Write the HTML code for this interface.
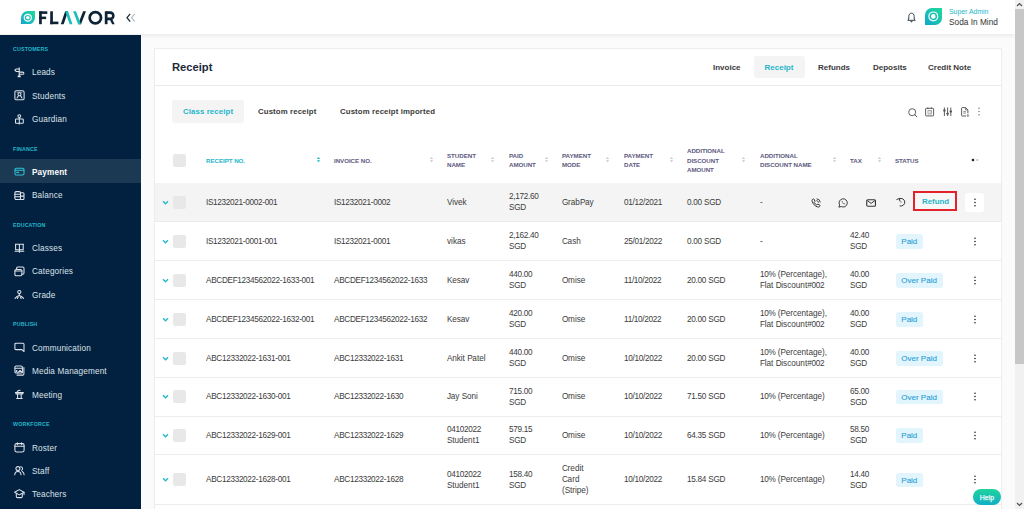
<!DOCTYPE html><html><head><meta charset="utf-8"><style>
*{box-sizing:border-box;margin:0;padding:0}
html,body{width:1024px;height:509px;overflow:hidden}
body{position:relative;background:#fbfbfb;font-family:"Liberation Sans", sans-serif;color:#333}
.a{position:absolute;white-space:nowrap}
.sb{position:absolute;left:0;top:35px;width:141px;height:474px;background:#022140}
.sec{position:absolute;left:13px;font-size:5.3px;font-weight:bold;color:#25b6ca;letter-spacing:0.15px}
.it{position:absolute;left:32px;font-size:8.2px;color:#dde2e8;line-height:10px;letter-spacing:0.15px}
.ic{position:absolute;left:13.5px;width:11px;height:11px}
.th{position:absolute;font-size:6.2px;font-weight:bold;color:#5f5c7c;line-height:9.6px;letter-spacing:-0.05px}
.td{position:absolute;font-size:8.2px;color:#3c3c3c;line-height:11px}
.n{letter-spacing:-0.31px}
.sort{position:absolute;width:5px;height:7px}
.chk{position:absolute;left:173px;width:13px;height:13px;background:#e8e8e8;border-radius:2px}
.chev{position:absolute;left:162px;width:7px;height:5px}
.badge{position:absolute;left:895.5px;height:14.5px;background:#e3f5fc;color:#1fa0d8;-webkit-text-stroke:0.1px #1fa0d8;font-size:8px;line-height:15.2px;padding:0 5.8px;border-radius:2.5px}
.dots{position:absolute;left:972.5px;width:4px;height:9px}
.rline{position:absolute;left:155px;width:846px;height:1px;background:#ececec}
</style></head><body>
<div class="a" style="left:0;top:0;width:1015px;height:34px;background:#fff;box-shadow:0 1.5px 4px rgba(0,0,0,0.07)"></div>
<svg class="a" style="left:21px;top:10.8px" width="14" height="13.4" viewBox="0 0 14 14" preserveAspectRatio="none">
<defs><linearGradient id="lg1" x1="0" y1="1" x2="1" y2="0"><stop offset="0" stop-color="#14a6d2"/><stop offset="1" stop-color="#1fd99a"/></linearGradient></defs>
<path d="M0 14 V7 A7 7 0 0 1 7 0 H14 V7 A7 7 0 0 1 7 14 Z" fill="url(#lg1)"/>
<circle cx="6.8" cy="7" r="3.55" fill="none" stroke="#fff" stroke-width="1.25"/><circle cx="6.8" cy="7" r="1.75" fill="#fff"/></svg>
<svg class="a" style="left:0;top:0" width="140" height="30" viewBox="0 0 140 30">
<g fill="#0f2338">
<rect x="39.1" y="11.3" width="2.7" height="12.9"/><rect x="39.1" y="11.3" width="8.2" height="2.6"/><rect x="39.1" y="16.6" width="7" height="2.5"/>
<rect x="50.2" y="11.3" width="2.7" height="12.9"/><rect x="50.2" y="21.6" width="8.2" height="2.6"/>
<polygon points="60.8,24.2 63.7,24.2 68.1,11.3 65.2,11.3"/>
<polygon points="83.1,11.3 86,11.3 81,24.2 78.1,24.2"/>
<rect x="104.8" y="11.3" width="2.7" height="12.9"/>
<polygon points="109.3,18.6 111.9,18.6 114.7,24.2 112.1,24.2"/>
</g>
<g fill="#1cc0b8"><polygon points="65.2,11.3 68.1,11.3 72.5,24.2 69.6,24.2"/><polygon points="73.1,11.3 76,11.3 81,24.2 78.1,24.2"/></g>
<circle cx="95.35" cy="17.75" r="5.7" fill="none" stroke="#0f2338" stroke-width="2.7"/>
<path d="M106 12.6 H110.2 A3.15 3.15 0 0 1 110.2 18.9 H106" fill="none" stroke="#0f2338" stroke-width="2.6"/>
<path d="M130.2 13.8 L127 17.7 L130.2 21.6" fill="none" stroke="#1d2b3a" stroke-width="1.3"/>
<path d="M134.8 13.8 L131.6 17.7 L134.8 21.6" fill="none" stroke="#b9bec4" stroke-width="1.3"/>
</svg>
<svg class="a" style="left:907px;top:12px" width="9" height="11" viewBox="0 0 9 11"><path d="M4.5 1.2 C2.6 1.2 1.8 2.8 1.8 4.5 V7 L0.8 8.3 H8.2 L7.2 7 V4.5 C7.2 2.8 6.4 1.2 4.5 1.2Z" fill="none" stroke="#1d2b3a" stroke-width="0.9"/><path d="M3.5 9.3 Q4.5 10.6 5.5 9.3" fill="#1d2b3a" stroke="#1d2b3a" stroke-width="0.8"/></svg>
<svg class="a" style="left:925px;top:8px" width="17" height="17" viewBox="0 0 17 17">
<defs><linearGradient id="lg2" x1="0" y1="1" x2="1" y2="0"><stop offset="0" stop-color="#12a6cf"/><stop offset="1" stop-color="#1fdb98"/></linearGradient></defs>
<path d="M0 17 V7 A7 7 0 0 1 7 0 H17 V10 A7 7 0 0 1 10 17 Z" fill="url(#lg2)"/>
<circle cx="8.3" cy="8.4" r="4.4" fill="none" stroke="#fff" stroke-width="1.2"/><circle cx="8.3" cy="8.4" r="2.3" fill="#fff"/></svg>
<div class="a" style="left:949px;top:7.8px;font-size:6.9px;color:#25b6ca;line-height:8px">Super Admin</div>
<div class="a" style="left:949px;top:17px;font-size:8.3px;color:#333;line-height:10px">Soda In Mind</div>
<div class="a" style="left:1015px;top:0;width:9px;height:509px;background:#f1f1f1"></div>
<div class="a" style="left:1015px;top:9px;width:9px;height:355px;background:#c7c7c7"></div>
<svg class="a" style="left:1016px;top:2px" width="7" height="5" viewBox="0 0 7 5"><path d="M1 4 L3.5 1.5 L6 4" fill="none" stroke="#505050" stroke-width="1.2"/></svg>
<svg class="a" style="left:1016px;top:502px" width="7" height="5" viewBox="0 0 7 5"><path d="M1 1 L3.5 3.5 L6 1" fill="none" stroke="#505050" stroke-width="1.2"/></svg>
<div class="sb"></div>
<div class="a" style="left:0;top:159px;width:141px;height:24px;background:#1c3954"></div>
<div class="sec" style="top:46px;line-height:6px">CUSTOMERS</div>
<div class="sec" style="top:146px;line-height:6px">FINANCE</div>
<div class="sec" style="top:222px;line-height:6px">EDUCATION</div>
<div class="sec" style="top:321px;line-height:6px">PUBLISH</div>
<div class="sec" style="top:421px;line-height:6px">WORKFORCE</div>
<div class="it" style="top:68.0px;">Leads</div>
<svg class="ic" style="top:66.5px" viewBox="0 0 11 11"><g fill="none" stroke="#dfe4ea" stroke-width="1.05" stroke-linecap="round" stroke-linejoin="round"><path d="M5.2 0.8 V8.6"/><path d="M5.2 1.9 H2.3 L0.8 3.2 L2.3 4.5 H5.2"/><path d="M5.2 5.1 H8.6 Q9.9 5.1 9.9 6.2 Q9.9 7.3 8.6 7.3 H5.2"/><rect x="3.6" y="8.6" width="3.2" height="1.6" rx="0.4" fill="#dfe4ea" stroke="none"/></g></svg>
<div class="it" style="top:91.5px;">Students</div>
<svg class="ic" style="top:90px" viewBox="0 0 11 11"><g fill="none" stroke="#dfe4ea" stroke-width="1.05" stroke-linecap="round" stroke-linejoin="round"><rect x="0.9" y="0.8" width="9.2" height="9" rx="1.4"/><circle cx="5.5" cy="4.2" r="1.5"/><path d="M3 8 L4.4 5.9 M8 8 L6.6 5.9"/><path d="M3 2.3 H8" stroke-width="0.6"/></g></svg>
<div class="it" style="top:115.0px;">Guardian</div>
<svg class="ic" style="top:113.5px" viewBox="0 0 11 11"><g fill="none" stroke="#dfe4ea" stroke-width="1.05" stroke-linecap="round" stroke-linejoin="round"><circle cx="5.3" cy="2.1" r="1.4"/><rect x="1.5" y="4.9" width="7.8" height="4.4" rx="0.8"/><path d="M5.3 3.5 V9.9"/></g></svg>
<div class="it" style="top:167.5px;font-weight:bold;color:#fff">Payment</div>
<svg class="ic" style="top:166px" viewBox="0 0 11 11"><g fill="none" stroke="#2fc0d2" stroke-width="1.05" stroke-linecap="round" stroke-linejoin="round"><rect x="1" y="2.2" width="9" height="6.8" rx="1.3"/><path d="M1 4.2 H10"/><path d="M2.7 6.4 H4.6" stroke-width="1.2"/></g></svg>
<div class="it" style="top:191.0px;">Balance</div>
<svg class="ic" style="top:189.5px" viewBox="0 0 11 11"><g fill="none" stroke="#dfe4ea" stroke-width="1.05" stroke-linecap="round" stroke-linejoin="round"><rect x="0.9" y="1.6" width="5.6" height="7.8" rx="1.2"/><path d="M0.9 4.2 H6.5 M0.9 6.8 H6.5"/><path d="M6.5 2.8 H9 Q10 2.8 10 3.8 V8.4 Q10 9.4 9 9.4 H6.5 M6.5 6.1 H10"/></g></svg>
<div class="it" style="top:243.5px;">Classes</div>
<svg class="ic" style="top:242px" viewBox="0 0 11 11"><g fill="none" stroke="#dfe4ea" stroke-width="1.05" stroke-linecap="round" stroke-linejoin="round"><path d="M1.6 2.2 H4.6 Q5.4 2.2 5.4 3 V8 M9.2 2.2 H6.2 Q5.4 2.2 5.4 3"/><path d="M1.6 2.2 V7.8 H9.2 V2.2"/><path d="M1 9.3 H9.8 M5.4 7.8 V10.2"/></g></svg>
<div class="it" style="top:267.0px;">Categories</div>
<svg class="ic" style="top:265.5px" viewBox="0 0 11 11"><g fill="none" stroke="#dfe4ea" stroke-width="1.05" stroke-linecap="round" stroke-linejoin="round"><rect x="0.9" y="3.4" width="7" height="6.4" rx="1.3"/><path d="M0.9 5 H7.9"/><path d="M2.6 3.4 V2.2 Q2.6 1 3.8 1 H8.8 Q10 1 10 2.2 V7 Q10 8.2 8.8 8.2 H7.9"/></g></svg>
<div class="it" style="top:290.5px;">Grade</div>
<svg class="ic" style="top:289px" viewBox="0 0 11 11"><g fill="none" stroke="#dfe4ea" stroke-width="1.05" stroke-linecap="round" stroke-linejoin="round"><circle cx="5.3" cy="3.1" r="1.6"/><path d="M5.3 4.7 V6.4"/><path d="M1 9.4 Q3 7.2 5.3 6.6 Q7.6 7.2 9.6 9.4"/><path d="M3.4 9.5 L4.2 8 M7.2 9.5 L6.4 8"/></g></svg>
<div class="it" style="top:343.5px;">Communication</div>
<svg class="ic" style="top:342px" viewBox="0 0 11 11"><g fill="none" stroke="#dfe4ea" stroke-width="1.05" stroke-linecap="round" stroke-linejoin="round"><path d="M2 1.2 H8.9 Q10 1.2 10 2.3 V9.6 L7.9 7.6 H2 Q0.9 7.6 0.9 6.5 V2.3 Q0.9 1.2 2 1.2 Z"/></g></svg>
<div class="it" style="top:366.5px;">Media Management</div>
<svg class="ic" style="top:365px" viewBox="0 0 11 11"><g fill="none" stroke="#dfe4ea" stroke-width="1.05" stroke-linecap="round" stroke-linejoin="round"><rect x="0.9" y="1" width="7.5" height="7" rx="1.3"/><path d="M0.9 3.2 H8.4"/><path d="M3.6 8 L6 5.3 L8.4 7.6"/><circle cx="2.5" cy="6" r="0.5"/><path d="M9.9 2.6 V8.9 Q9.9 10.1 8.7 10.1 H3"/></g></svg>
<div class="it" style="top:390.5px;">Meeting</div>
<svg class="ic" style="top:389px" viewBox="0 0 11 11"><g fill="none" stroke="#dfe4ea" stroke-width="1.05" stroke-linecap="round" stroke-linejoin="round"><path d="M3 3.1 Q3.8 0.9 6.2 1.2"/><path d="M1.4 3.6 H9.4 L8.6 5 H2.2 Z"/><path d="M3.6 5 V9.2 M7.2 5 V9.2 M2.6 9.5 H8.2"/></g></svg>
<div class="it" style="top:443.5px;">Roster</div>
<svg class="ic" style="top:442px" viewBox="0 0 11 11"><g fill="none" stroke="#dfe4ea" stroke-width="1.05" stroke-linecap="round" stroke-linejoin="round"><rect x="0.9" y="1.6" width="9.2" height="8.3" rx="1.6"/><path d="M0.9 4.2 H10.1 M3.4 0.7 V2.6 M7.6 0.7 V2.6"/></g></svg>
<div class="it" style="top:466.5px;">Staff</div>
<svg class="ic" style="top:465px" viewBox="0 0 11 11"><g fill="none" stroke="#dfe4ea" stroke-width="1.05" stroke-linecap="round" stroke-linejoin="round"><circle cx="3.9" cy="3.6" r="2"/><path d="M0.8 9.8 Q0.8 6.5 3.9 6.5 Q7 6.5 7 9.8"/><path d="M6.6 1.7 A2 2 0 0 1 7.6 5.4 M8.2 6.6 Q10.1 7.4 10.1 9.8"/></g></svg>
<div class="it" style="top:489.5px;">Teachers</div>
<svg class="ic" style="top:488px" viewBox="0 0 11 11"><g fill="none" stroke="#dfe4ea" stroke-width="1.05" stroke-linecap="round" stroke-linejoin="round"><path d="M5.3 1.6 L10 4.3 L5.3 6.9 L0.6 4.3 Z"/><path d="M2.3 5.5 V8.4 Q2.3 9.6 3.5 9.6 H7.1 Q8.3 9.6 8.3 8.4 V5.5"/><path d="M10 4.3 V6.6"/></g></svg>
<div class="a" style="left:154px;top:48px;width:848px;height:470px;background:#fff;border:1px solid #ededed;border-radius:1px;box-shadow:0 0 2px rgba(0,0,0,0.02)"></div>
<div class="a" style="left:172px;top:60.5px;font-size:11.2px;font-weight:bold;color:#1b2a3b;line-height:12px">Receipt</div>
<div class="a" style="left:155px;top:85px;width:846px;height:1px;background:#ebebeb"></div>
<div class="a" style="left:754px;top:56px;width:51px;height:22px;background:#f4f4f4;border-radius:3px"></div>
<div class="a" style="left:713px;top:62.8px;font-size:8px;font-weight:bold;color:#3a3a3a;line-height:10px">Invoice</div>
<div class="a" style="left:764.5px;top:62.8px;font-size:8px;font-weight:bold;color:#25b6ca;line-height:10px">Receipt</div>
<div class="a" style="left:818px;top:62.8px;font-size:8px;font-weight:bold;color:#3a3a3a;line-height:10px">Refunds</div>
<div class="a" style="left:873px;top:62.8px;font-size:8px;font-weight:bold;color:#3a3a3a;line-height:10px">Deposits</div>
<div class="a" style="left:928px;top:62.8px;font-size:8px;font-weight:bold;color:#3a3a3a;line-height:10px">Credit Note</div>
<div class="a" style="left:172px;top:100px;width:72px;height:23px;background:#f4f4f4;border-radius:3px"></div>
<div class="a" style="left:183px;top:107.3px;font-size:7.8px;font-weight:bold;color:#25b6ca;line-height:10px;letter-spacing:0.12px">Class receipt</div>
<div class="a" style="left:258px;top:107.3px;font-size:7.8px;font-weight:bold;color:#3a3a3a;line-height:10px;letter-spacing:0.12px">Custom receipt</div>
<div class="a" style="left:340px;top:107.3px;font-size:7.8px;font-weight:bold;color:#3a3a3a;line-height:10px;letter-spacing:0.12px">Custom receipt imported</div>
<svg class="a" style="left:907.5px;top:107.5px" width="10" height="10" viewBox="0 0 10 10"><circle cx="4.2" cy="4.2" r="3.5" fill="none" stroke="#555" stroke-width="0.95"/><path d="M6.8 6.8 L8.8 8.8" stroke="#555" stroke-width="1" stroke-linecap="round"/></svg>
<svg class="a" style="left:924.5px;top:107px" width="10" height="10" viewBox="0 0 10 10"><rect x="0.6" y="1.3" width="8" height="7.6" rx="0.7" fill="none" stroke="#555" stroke-width="0.95"/><path d="M2.8 0.4 V2 M6.4 0.4 V2" stroke="#555" stroke-width="0.9"/><rect x="3" y="3.6" width="3.4" height="3.4" fill="none" stroke="#777" stroke-width="0.6"/><path d="M4.6 4.4 H5.8 M4.6 5.3 H5.8 M4.6 6.2 H5.8" stroke="#777" stroke-width="0.4"/></svg>
<svg class="a" style="left:942.5px;top:107px" width="10" height="10" viewBox="0 0 10 10"><path d="M1.4 0.5 V9 M4.6 0.5 V9 M7.8 0.5 V9" stroke="#555" stroke-width="0.95"/><rect x="0.2" y="2.6" width="2.4" height="1.8" rx="0.4" fill="#555"/><rect x="3.4" y="5.8" width="2.4" height="1.8" rx="0.4" fill="#555"/><rect x="6.6" y="3.6" width="2.4" height="1.8" rx="0.4" fill="#555"/></svg>
<svg class="a" style="left:961px;top:107px" width="9" height="10" viewBox="0 0 9 10"><path d="M5 9 H1.3 Q0.6 9 0.6 8.3 V1.3 Q0.6 0.6 1.3 0.6 H4.6 L6.9 2.9 V6" fill="none" stroke="#555" stroke-width="0.95" stroke-linejoin="round"/><path d="M4.5 0.8 V3 H6.8" fill="none" stroke="#555" stroke-width="0.7"/><path d="M2.3 4.6 H4.8 M2.3 6.1 H4.8" stroke="#555" stroke-width="0.7"/><path d="M6.9 6.6 V9.4 M5.9 8.5 L6.9 9.5 L7.9 8.5" fill="none" stroke="#555" stroke-width="0.8"/></svg>
<svg class="a" style="left:977px;top:107px" width="4" height="9" viewBox="0 0 4 9"><circle cx="2" cy="1.2" r="0.8" fill="#888"/><circle cx="2" cy="4.5" r="0.8" fill="#888"/><circle cx="2" cy="7.8" r="0.8" fill="#888"/></svg>
<div class="chk" style="top:154px"></div>
<div class="th" style="left:206px;top:155.7px;color:#25b6ca">RECEIPT NO.</div>
<svg class="sort" style="left:315.7px;top:155.9px" viewBox="0 0 5 7"><path d="M0.8 3 L2.5 1 L4.2 3Z M0.8 4.2 L2.5 6.2 L4.2 4.2Z" fill="#25b6ca"/></svg>
<div class="th" style="left:334px;top:155.7px;color:#5d5a7e">INVOICE NO.</div>
<svg class="sort" style="left:428.5px;top:155.9px" viewBox="0 0 5 7"><path d="M0.8 3 L2.5 1 L4.2 3Z M0.8 4.2 L2.5 6.2 L4.2 4.2Z" fill="#c9c9d3"/></svg>
<div class="th" style="left:447px;top:150.9px;color:#5d5a7e">STUDENT<br>NAME</div>
<svg class="sort" style="left:490.4px;top:155.9px" viewBox="0 0 5 7"><path d="M0.8 3 L2.5 1 L4.2 3Z M0.8 4.2 L2.5 6.2 L4.2 4.2Z" fill="#c9c9d3"/></svg>
<div class="th" style="left:509px;top:150.9px;color:#5d5a7e">PAID<br>AMOUNT</div>
<svg class="sort" style="left:543.8px;top:155.9px" viewBox="0 0 5 7"><path d="M0.8 3 L2.5 1 L4.2 3Z M0.8 4.2 L2.5 6.2 L4.2 4.2Z" fill="#c9c9d3"/></svg>
<div class="th" style="left:562px;top:150.9px;color:#5d5a7e">PAYMENT<br>MODE</div>
<svg class="sort" style="left:604.8px;top:155.9px" viewBox="0 0 5 7"><path d="M0.8 3 L2.5 1 L4.2 3Z M0.8 4.2 L2.5 6.2 L4.2 4.2Z" fill="#c9c9d3"/></svg>
<div class="th" style="left:624px;top:150.9px;color:#5d5a7e">PAYMENT<br>DATE</div>
<svg class="sort" style="left:668.8px;top:155.9px" viewBox="0 0 5 7"><path d="M0.8 3 L2.5 1 L4.2 3Z M0.8 4.2 L2.5 6.2 L4.2 4.2Z" fill="#c9c9d3"/></svg>
<div class="th" style="left:687px;top:146.1px;color:#5d5a7e">ADDITIONAL<br>DISCOUNT<br>AMOUNT</div>
<svg class="sort" style="left:740.9px;top:155.9px" viewBox="0 0 5 7"><path d="M0.8 3 L2.5 1 L4.2 3Z M0.8 4.2 L2.5 6.2 L4.2 4.2Z" fill="#c9c9d3"/></svg>
<div class="th" style="left:760px;top:150.9px;color:#5d5a7e">ADDITIONAL<br>DISCOUNT NAME</div>
<svg class="sort" style="left:831.5px;top:155.9px" viewBox="0 0 5 7"><path d="M0.8 3 L2.5 1 L4.2 3Z M0.8 4.2 L2.5 6.2 L4.2 4.2Z" fill="#c9c9d3"/></svg>
<div class="th" style="left:850px;top:155.7px;color:#5d5a7e">TAX</div>
<svg class="sort" style="left:877px;top:155.9px" viewBox="0 0 5 7"><path d="M0.8 3 L2.5 1 L4.2 3Z M0.8 4.2 L2.5 6.2 L4.2 4.2Z" fill="#c9c9d3"/></svg>
<div class="th" style="left:895px;top:155.7px;color:#5d5a7e">STATUS</div>
<svg class="a" style="left:970.5px;top:158px" width="9" height="4" viewBox="0 0 9 4"><circle cx="2" cy="2" r="1.35" fill="#222"/><circle cx="6.3" cy="2" r="1.1" fill="#c4c4c4"/></svg>
<div class="a" style="left:155px;top:183px;width:846px;height:38px;background:#f4f4f4"></div>
<div class="rline" style="top:221px"></div>
<div class="rline" style="top:260px"></div>
<div class="rline" style="top:299px"></div>
<div class="rline" style="top:338px"></div>
<div class="rline" style="top:377px"></div>
<div class="rline" style="top:415.6px"></div>
<div class="rline" style="top:454.3px"></div>
<div class="rline" style="top:504px"></div>
<svg class="chev" style="top:199.5px" viewBox="0 0 7 5"><path d="M1 1.2 L3.5 3.7 L6 1.2" fill="none" stroke="#25b6ca" stroke-width="1.35"/></svg>
<div class="chk" style="top:195.5px"></div>
<div class="td" style="left:206px;top:196.5px"><span class="n">IS1232021-0002-001</span></div>
<div class="td" style="left:334px;top:196.5px"><span class="n">IS1232021-0002</span></div>
<div class="td" style="left:447px;top:196.5px"><span class="n">V</span>ivek</div>
<div class="td" style="left:509px;top:191.0px"><span class="n">2,172.60</span><br><span class="n">SGD</span></div>
<div class="td" style="left:562px;top:196.5px"><span class="n">G</span>rab<span class="n">P</span>ay</div>
<div class="td" style="left:624px;top:196.5px"><span class="n">01/12/2021</span></div>
<div class="td" style="left:687px;top:196.5px"><span class="n">0.00</span> <span class="n">SGD</span></div>
<div class="td" style="left:760px;top:196.5px"><span class="n">-</span></div>
<svg class="a" style="left:810.5px;top:197.5px" width="11" height="10" viewBox="0 0 11 10"><path d="M2.3 0.9 C1.3 1.2 0.8 2.1 1.1 3.1 C1.9 6 4 8.2 6.9 9 C7.9 9.2 8.7 8.8 9 7.8 L8.3 6.6 L6.6 6.2 L5.8 7 C4.6 6.3 3.8 5.5 3.1 4.3 L3.9 3.5 L3.5 1.7 Z" fill="none" stroke="#333" stroke-width="1" stroke-linejoin="round"/><path d="M6 0.8 A3.6 3.6 0 0 1 9.3 4.1 M5.8 2.6 A1.9 1.9 0 0 1 7.5 4.3" fill="none" stroke="#333" stroke-width="0.9" stroke-linecap="round"/></svg>
<svg class="a" style="left:838px;top:197.6px" width="10" height="10" viewBox="0 0 10 10"><path d="M0.9 9.2 L1.6 6.9 A4.1 4.1 0 1 1 3.2 8.5 Z" fill="none" stroke="#333" stroke-width="0.95" stroke-linejoin="round"/><path d="M3.6 3.3 Q3.7 5.9 6.4 6.4 L6.8 5.6 L5.9 5.1 L5.5 5.5 Q4.6 5 4.3 4.2 L4.7 3.8 L4.3 2.9 Z" fill="#333"/></svg>
<svg class="a" style="left:866px;top:198.9px" width="10" height="8" viewBox="0 0 10 8"><rect x="0.75" y="0.75" width="8.7" height="6.5" rx="1.1" fill="none" stroke="#333" stroke-width="1.1"/><path d="M1.3 1.6 L5.1 4.4 L8.9 1.6" fill="none" stroke="#333" stroke-width="1"/></svg>
<svg class="a" style="left:895.5px;top:197.0px" width="10" height="10" viewBox="0 0 10 10"><path d="M3.4 1.6 A3.9 3.9 0 1 1 4 9" fill="none" stroke="#333" stroke-width="1" stroke-linecap="round"/><path d="M0.9 2.4 L3.4 1.5 L3.9 4" fill="none" stroke="#333" stroke-width="1" stroke-linecap="round" stroke-linejoin="round"/><circle cx="5" cy="5" r="0.6" fill="#333"/></svg>
<div class="a" style="left:913px;top:191.0px;width:44px;height:20px;border:2px solid #e2232b;background:#f7f7f7"></div>
<div class="a" style="left:922px;top:197.4px;font-size:7.9px;font-weight:bold;color:#26b5c8;line-height:10px">Refund</div>
<div class="a" style="left:965px;top:192.5px;width:19px;height:19px;background:#fff;border-radius:3px"></div>
<svg class="dots" style="top:197.5px" viewBox="0 0 4 9"><circle cx="2" cy="1.2" r="0.8" fill="#222"/><circle cx="2" cy="4.5" r="0.8" fill="#222"/><circle cx="2" cy="7.8" r="0.8" fill="#222"/></svg>
<svg class="chev" style="top:238.5px" viewBox="0 0 7 5"><path d="M1 1.2 L3.5 3.7 L6 1.2" fill="none" stroke="#25b6ca" stroke-width="1.35"/></svg>
<div class="chk" style="top:234.5px"></div>
<div class="td" style="left:206px;top:235.5px"><span class="n">IS1232021-0001-001</span></div>
<div class="td" style="left:334px;top:235.5px"><span class="n">IS1232021-0001</span></div>
<div class="td" style="left:447px;top:235.5px">vikas</div>
<div class="td" style="left:509px;top:230.0px"><span class="n">2,162.40</span><br><span class="n">SGD</span></div>
<div class="td" style="left:562px;top:235.5px"><span class="n">C</span>ash</div>
<div class="td" style="left:624px;top:235.5px"><span class="n">25/01/2022</span></div>
<div class="td" style="left:687px;top:235.5px"><span class="n">0.00</span> <span class="n">SGD</span></div>
<div class="td" style="left:760px;top:235.5px"><span class="n">-</span></div>
<div class="td" style="left:850px;top:230.0px"><span class="n">42.40</span><br><span class="n">SGD</span></div>
<div class="badge" style="top:234.0px">Paid</div>
<svg class="dots" style="top:236.5px" viewBox="0 0 4 9"><circle cx="2" cy="1.2" r="0.8" fill="#222"/><circle cx="2" cy="4.5" r="0.8" fill="#222"/><circle cx="2" cy="7.8" r="0.8" fill="#222"/></svg>
<svg class="chev" style="top:277.5px" viewBox="0 0 7 5"><path d="M1 1.2 L3.5 3.7 L6 1.2" fill="none" stroke="#25b6ca" stroke-width="1.35"/></svg>
<div class="chk" style="top:273.5px"></div>
<div class="td" style="left:206px;top:274.5px"><span class="n">ABCDEF1234562022-1633-001</span></div>
<div class="td" style="left:334px;top:274.5px"><span class="n">ABCDEF1234562022-1633</span></div>
<div class="td" style="left:447px;top:274.5px"><span class="n">K</span>esav</div>
<div class="td" style="left:509px;top:269.0px"><span class="n">440.00</span><br><span class="n">SGD</span></div>
<div class="td" style="left:562px;top:274.5px"><span class="n">O</span>mise</div>
<div class="td" style="left:624px;top:274.5px"><span class="n">11/10/2022</span></div>
<div class="td" style="left:687px;top:274.5px"><span class="n">20.00</span> <span class="n">SGD</span></div>
<div class="td" style="left:760px;top:269.0px"><span class="n">10%</span> (<span class="n">P</span>ercentage)<span class="n">,</span><br><span class="n">F</span>lat <span class="n">D</span>iscount<span class="n">#002</span></div>
<div class="td" style="left:850px;top:269.0px"><span class="n">40.00</span><br><span class="n">SGD</span></div>
<div class="badge" style="top:273.0px">Over Paid</div>
<svg class="dots" style="top:275.5px" viewBox="0 0 4 9"><circle cx="2" cy="1.2" r="0.8" fill="#222"/><circle cx="2" cy="4.5" r="0.8" fill="#222"/><circle cx="2" cy="7.8" r="0.8" fill="#222"/></svg>
<svg class="chev" style="top:316.5px" viewBox="0 0 7 5"><path d="M1 1.2 L3.5 3.7 L6 1.2" fill="none" stroke="#25b6ca" stroke-width="1.35"/></svg>
<div class="chk" style="top:312.5px"></div>
<div class="td" style="left:206px;top:313.5px"><span class="n">ABCDEF1234562022-1632-001</span></div>
<div class="td" style="left:334px;top:313.5px"><span class="n">ABCDEF1234562022-1632</span></div>
<div class="td" style="left:447px;top:313.5px"><span class="n">K</span>esav</div>
<div class="td" style="left:509px;top:308.0px"><span class="n">420.00</span><br><span class="n">SGD</span></div>
<div class="td" style="left:562px;top:313.5px"><span class="n">O</span>mise</div>
<div class="td" style="left:624px;top:313.5px"><span class="n">11/10/2022</span></div>
<div class="td" style="left:687px;top:313.5px"><span class="n">20.00</span> <span class="n">SGD</span></div>
<div class="td" style="left:760px;top:308.0px"><span class="n">10%</span> (<span class="n">P</span>ercentage)<span class="n">,</span><br><span class="n">F</span>lat <span class="n">D</span>iscount<span class="n">#002</span></div>
<div class="td" style="left:850px;top:308.0px"><span class="n">40.00</span><br><span class="n">SGD</span></div>
<div class="badge" style="top:312.0px">Paid</div>
<svg class="dots" style="top:314.5px" viewBox="0 0 4 9"><circle cx="2" cy="1.2" r="0.8" fill="#222"/><circle cx="2" cy="4.5" r="0.8" fill="#222"/><circle cx="2" cy="7.8" r="0.8" fill="#222"/></svg>
<svg class="chev" style="top:355.5px" viewBox="0 0 7 5"><path d="M1 1.2 L3.5 3.7 L6 1.2" fill="none" stroke="#25b6ca" stroke-width="1.35"/></svg>
<div class="chk" style="top:351.5px"></div>
<div class="td" style="left:206px;top:352.5px"><span class="n">ABC12332022-1631-001</span></div>
<div class="td" style="left:334px;top:352.5px"><span class="n">ABC12332022-1631</span></div>
<div class="td" style="left:447px;top:352.5px"><span class="n">A</span>nkit <span class="n">P</span>atel</div>
<div class="td" style="left:509px;top:347.0px"><span class="n">440.00</span><br><span class="n">SGD</span></div>
<div class="td" style="left:562px;top:352.5px"><span class="n">O</span>mise</div>
<div class="td" style="left:624px;top:352.5px"><span class="n">10/10/2022</span></div>
<div class="td" style="left:687px;top:352.5px"><span class="n">20.00</span> <span class="n">SGD</span></div>
<div class="td" style="left:760px;top:347.0px"><span class="n">10%</span> (<span class="n">P</span>ercentage)<span class="n">,</span><br><span class="n">F</span>lat <span class="n">D</span>iscount<span class="n">#002</span></div>
<div class="td" style="left:850px;top:347.0px"><span class="n">40.00</span><br><span class="n">SGD</span></div>
<div class="badge" style="top:351.0px">Over Paid</div>
<svg class="dots" style="top:353.5px" viewBox="0 0 4 9"><circle cx="2" cy="1.2" r="0.8" fill="#222"/><circle cx="2" cy="4.5" r="0.8" fill="#222"/><circle cx="2" cy="7.8" r="0.8" fill="#222"/></svg>
<svg class="chev" style="top:394.3px" viewBox="0 0 7 5"><path d="M1 1.2 L3.5 3.7 L6 1.2" fill="none" stroke="#25b6ca" stroke-width="1.35"/></svg>
<div class="chk" style="top:390.3px"></div>
<div class="td" style="left:206px;top:391.3px"><span class="n">ABC12332022-1630-001</span></div>
<div class="td" style="left:334px;top:391.3px"><span class="n">ABC12332022-1630</span></div>
<div class="td" style="left:447px;top:391.3px"><span class="n">J</span>ay <span class="n">S</span>oni</div>
<div class="td" style="left:509px;top:385.8px"><span class="n">715.00</span><br><span class="n">SGD</span></div>
<div class="td" style="left:562px;top:391.3px"><span class="n">O</span>mise</div>
<div class="td" style="left:624px;top:391.3px"><span class="n">10/10/2022</span></div>
<div class="td" style="left:687px;top:391.3px"><span class="n">71.50</span> <span class="n">SGD</span></div>
<div class="td" style="left:760px;top:391.3px"><span class="n">10%</span> (<span class="n">P</span>ercentage)</div>
<div class="td" style="left:850px;top:385.8px"><span class="n">65.00</span><br><span class="n">SGD</span></div>
<div class="badge" style="top:389.8px">Over Paid</div>
<svg class="dots" style="top:392.3px" viewBox="0 0 4 9"><circle cx="2" cy="1.2" r="0.8" fill="#222"/><circle cx="2" cy="4.5" r="0.8" fill="#222"/><circle cx="2" cy="7.8" r="0.8" fill="#222"/></svg>
<svg class="chev" style="top:432.95000000000005px" viewBox="0 0 7 5"><path d="M1 1.2 L3.5 3.7 L6 1.2" fill="none" stroke="#25b6ca" stroke-width="1.35"/></svg>
<div class="chk" style="top:428.95000000000005px"></div>
<div class="td" style="left:206px;top:429.95000000000005px"><span class="n">ABC12332022-1629-001</span></div>
<div class="td" style="left:334px;top:429.95000000000005px"><span class="n">ABC12332022-1629</span></div>
<div class="td" style="left:447px;top:424.45000000000005px"><span class="n">04102022</span><br><span class="n">S</span>tudent<span class="n">1</span></div>
<div class="td" style="left:509px;top:424.45000000000005px"><span class="n">579.15</span><br><span class="n">SGD</span></div>
<div class="td" style="left:562px;top:429.95000000000005px"><span class="n">O</span>mise</div>
<div class="td" style="left:624px;top:429.95000000000005px"><span class="n">10/10/2022</span></div>
<div class="td" style="left:687px;top:429.95000000000005px"><span class="n">64.35</span> <span class="n">SGD</span></div>
<div class="td" style="left:760px;top:429.95000000000005px"><span class="n">10%</span> (<span class="n">P</span>ercentage)</div>
<div class="td" style="left:850px;top:424.45000000000005px"><span class="n">58.50</span><br><span class="n">SGD</span></div>
<div class="badge" style="top:428.45000000000005px">Paid</div>
<svg class="dots" style="top:430.95000000000005px" viewBox="0 0 4 9"><circle cx="2" cy="1.2" r="0.8" fill="#222"/><circle cx="2" cy="4.5" r="0.8" fill="#222"/><circle cx="2" cy="7.8" r="0.8" fill="#222"/></svg>
<svg class="chev" style="top:477.15px" viewBox="0 0 7 5"><path d="M1 1.2 L3.5 3.7 L6 1.2" fill="none" stroke="#25b6ca" stroke-width="1.35"/></svg>
<div class="chk" style="top:473.15px"></div>
<div class="td" style="left:206px;top:474.15px"><span class="n">ABC12332022-1628-001</span></div>
<div class="td" style="left:334px;top:474.15px"><span class="n">ABC12332022-1628</span></div>
<div class="td" style="left:447px;top:468.65px"><span class="n">04102022</span><br><span class="n">S</span>tudent<span class="n">1</span></div>
<div class="td" style="left:509px;top:468.65px"><span class="n">158.40</span><br><span class="n">SGD</span></div>
<div class="td" style="left:562px;top:463.15px"><span class="n">C</span>redit<br><span class="n">C</span>ard<br>(<span class="n">S</span>tripe)</div>
<div class="td" style="left:624px;top:474.15px"><span class="n">10/10/2022</span></div>
<div class="td" style="left:687px;top:474.15px"><span class="n">15.84</span> <span class="n">SGD</span></div>
<div class="td" style="left:760px;top:474.15px"><span class="n">10%</span> (<span class="n">P</span>ercentage)</div>
<div class="td" style="left:850px;top:468.65px"><span class="n">14.40</span><br><span class="n">SGD</span></div>
<div class="badge" style="top:472.65px">Paid</div>
<svg class="dots" style="top:475.15px" viewBox="0 0 4 9"><circle cx="2" cy="1.2" r="0.8" fill="#222"/><circle cx="2" cy="4.5" r="0.8" fill="#222"/><circle cx="2" cy="7.8" r="0.8" fill="#222"/></svg>
<div class="a" style="left:973px;top:489px;width:28px;height:16px;border-radius:8px;background:linear-gradient(180deg,#1fd49c,#10aec6);color:#eafaf6;font-size:7px;-webkit-text-stroke:0.25px #eafaf6;text-align:center;line-height:18px">Help</div>
</body></html>
